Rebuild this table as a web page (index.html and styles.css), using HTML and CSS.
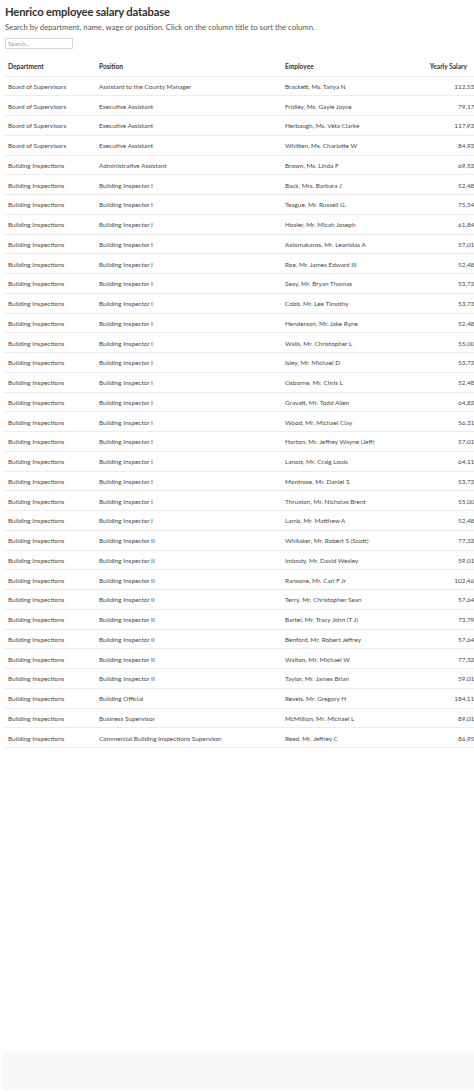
FILE: index.html
```html
<!DOCTYPE html>
<html lang="en">
<head>
<meta charset="utf-8">
<title>Henrico employee salary database</title>
<link rel="stylesheet" href="styles.css">
</head>
<body>
<div class="page">
  <header class="intro">
    <h1 class="title">Henrico employee salary database</h1>
    <p class="subtitle">Search by department, name, wage or position. Click on the column title to sort the column.</p>
    <input class="search" type="text" placeholder="Search...">
  </header>
  <div class="table-wrap">
    <table class="salaries">
      <thead>
        <tr><th class="c-dept">Department</th><th class="c-pos">Position</th><th class="c-emp">Employee</th><th class="c-sal">Yearly Salary</th></tr>
      </thead>
      <tbody>
        <tr><td>Board of Supervisors</td><td>Assistant to the County Manager</td><td>Brackett, Ms. Tanya N</td><td class="num">112,532</td></tr>
        <tr><td>Board of Supervisors</td><td>Executive Assistant</td><td>Fridley, Ms. Gayle Joyce</td><td class="num">79,172</td></tr>
        <tr><td>Board of Supervisors</td><td>Executive Assistant</td><td>Herbaugh, Ms. Veta Clarke</td><td class="num">117,932</td></tr>
        <tr><td>Board of Supervisors</td><td>Executive Assistant</td><td>Whitten, Ms. Charlotte W</td><td class="num">84,932</td></tr>
        <tr><td>Building Inspections</td><td>Administrative Assistant</td><td>Brown, Ms. Linda F</td><td class="num">69,532</td></tr>
        <tr><td>Building Inspections</td><td>Building Inspector I</td><td>Back, Mrs. Barbara J</td><td class="num">52,482</td></tr>
        <tr><td>Building Inspections</td><td>Building Inspector I</td><td>Teague, Mr. Russell G.</td><td class="num">75,542</td></tr>
        <tr><td>Building Inspections</td><td>Building Inspector I</td><td>Hosler, Mr. Micah Joseph</td><td class="num">61,842</td></tr>
        <tr><td>Building Inspections</td><td>Building Inspector I</td><td>Axiomakaros, Mr. Leonidas A</td><td class="num">57,012</td></tr>
        <tr><td>Building Inspections</td><td>Building Inspector I</td><td>Roe, Mr. James Edward III</td><td class="num">52,482</td></tr>
        <tr><td>Building Inspections</td><td>Building Inspector I</td><td>Seay, Mr. Bryan Thomas</td><td class="num">53,732</td></tr>
        <tr><td>Building Inspections</td><td>Building Inspector I</td><td>Cobb, Mr. Lee Timothy</td><td class="num">53,732</td></tr>
        <tr><td>Building Inspections</td><td>Building Inspector I</td><td>Henderson, Mr. Jake Ryne</td><td class="num">52,482</td></tr>
        <tr><td>Building Inspections</td><td>Building Inspector I</td><td>Walls, Mr. Christopher L</td><td class="num">55,002</td></tr>
        <tr><td>Building Inspections</td><td>Building Inspector I</td><td>Isley, Mr. Michael D</td><td class="num">53,732</td></tr>
        <tr><td>Building Inspections</td><td>Building Inspector I</td><td>Osborne, Mr. Chris L</td><td class="num">52,482</td></tr>
        <tr><td>Building Inspections</td><td>Building Inspector I</td><td>Gravatt, Mr. Todd Allen</td><td class="num">64,832</td></tr>
        <tr><td>Building Inspections</td><td>Building Inspector I</td><td>Wood, Mr. Michael Clay</td><td class="num">56,312</td></tr>
        <tr><td>Building Inspections</td><td>Building Inspector I</td><td>Horton, Mr. Jeffrey Wayne (Jeff)</td><td class="num">57,012</td></tr>
        <tr><td>Building Inspections</td><td>Building Inspector I</td><td>Lanois, Mr. Craig Louis</td><td class="num">64,112</td></tr>
        <tr><td>Building Inspections</td><td>Building Inspector I</td><td>Montrose, Mr. Daniel S</td><td class="num">53,732</td></tr>
        <tr><td>Building Inspections</td><td>Building Inspector I</td><td>Thruston, Mr. Nicholas Brent</td><td class="num">55,002</td></tr>
        <tr><td>Building Inspections</td><td>Building Inspector I</td><td>Lamb, Mr. Matthew A</td><td class="num">52,482</td></tr>
        <tr><td>Building Inspections</td><td>Building Inspector II</td><td>Whitaker, Mr. Robert S (Scott)</td><td class="num">77,332</td></tr>
        <tr><td>Building Inspections</td><td>Building Inspector II</td><td>Imbody, Mr. David Wesley</td><td class="num">59,012</td></tr>
        <tr><td>Building Inspections</td><td>Building Inspector II</td><td>Ransone, Mr. Carl F Jr</td><td class="num">102,462</td></tr>
        <tr><td>Building Inspections</td><td>Building Inspector II</td><td>Terry, Mr. Christopher Sean</td><td class="num">57,642</td></tr>
        <tr><td>Building Inspections</td><td>Building Inspector II</td><td>Bartel, Mr. Tracy John (T J)</td><td class="num">73,792</td></tr>
        <tr><td>Building Inspections</td><td>Building Inspector II</td><td>Benford, Mr. Robert Jeffrey</td><td class="num">57,642</td></tr>
        <tr><td>Building Inspections</td><td>Building Inspector II</td><td>Walton, Mr. Michael W</td><td class="num">77,332</td></tr>
        <tr><td>Building Inspections</td><td>Building Inspector II</td><td>Taylor, Mr. James Brian</td><td class="num">59,012</td></tr>
        <tr><td>Building Inspections</td><td>Building Official</td><td>Revels, Mr. Gregory H</td><td class="num">184,112</td></tr>
        <tr><td>Building Inspections</td><td>Business Supervisor</td><td>McMillion, Mr. Michael L</td><td class="num">89,012</td></tr>
        <tr><td>Building Inspections</td><td>Commercial Building Inspections Supervisor</td><td>Reed, Mr. Jeffrey C</td><td class="num">86,952</td></tr>
      </tbody>
    </table>
  </div>
  <footer class="footer"></footer>
</div>
</body>
</html>
```

FILE: styles.css
```css
html, body {
  margin: 0;
  padding: 0;
  background: #fff;
}

body {
  font-family: "Lato", "Noto Sans", sans-serif;
  color: #333;
  overflow: hidden;
}

.page {
  height: 1092px;
  display: flex;
  flex-direction: column;
  overflow: hidden;
}

.intro {
  padding: 5px 0 0 5px;
  display: flex;
  flex-direction: column;
  align-items: flex-start;
}

.title {
  margin: 0;
  font-size: 11.3px;
  line-height: 14px;
  letter-spacing: -0.2px;
  font-weight: 700;
  color: #333;
}

.subtitle {
  margin: 3px 0 0;
  font-size: 7.75px;
  line-height: 11px;
  color: #555;
}

.search {
  margin: 5px 0 0;
  box-sizing: border-box;
  width: 68px;
  height: 11px;
  padding: 0 0 0 2px;
  border: 1px solid #d6d6d6;
  border-radius: 1px;
  font-family: inherit;
  font-size: 6px;
  color: #333;
  outline: none;
}

.search::placeholder {
  color: #999;
}

.table-wrap {
  padding: 8px 0 0 4px;
  overflow: hidden;
}

.salaries {
  border-collapse: collapse;
  width: 478px;
  table-layout: fixed;
  font-size: 6.4px;
}

.salaries th,
.salaries td {
  box-sizing: border-box;
  padding: 0 4px;
  text-align: left;
  white-space: nowrap;
  overflow: hidden;
  border-bottom: 1px solid #ececec;
}

.c-dept { width: 91px; }
.c-pos { width: 186px; }
.c-emp { width: 130px; }
.c-sal { width: 71px; }

.salaries th {
  height: 19px;
  font-size: 6.6px;
  font-weight: 700;
  color: #333;
  vertical-align: middle;
}

.salaries th.c-sal {
  text-align: right;
  padding-right: 15px;
}

.salaries td {
  height: 19.75px;
  color: #4a4a4a;
  vertical-align: middle;
  padding-top: 1px;
}

.salaries td.num {
  text-align: right;
  padding-right: 4px;
}

.footer {
  margin: auto 0 2px 2px;
  height: 38px;
  background: #f7f7f7;
  border-radius: 3px 0 0 3px;
}
```
